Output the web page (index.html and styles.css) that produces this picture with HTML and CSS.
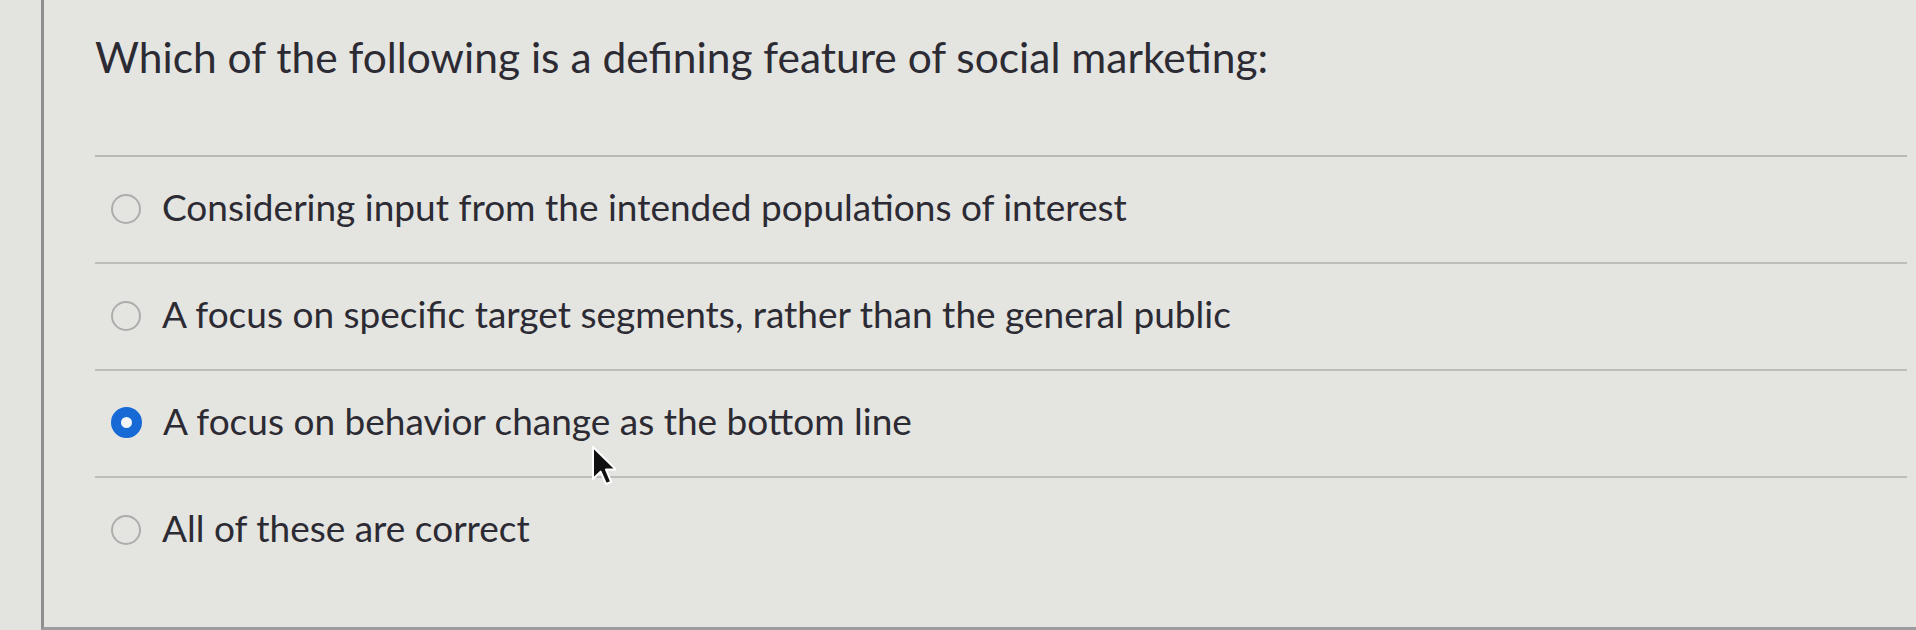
FILE: index.html
```html
<!DOCTYPE html>
<html lang="en">
<head>
<meta charset="utf-8">
<title>Quiz question</title>
<link rel="stylesheet" href="styles.css">
</head>
<body>
<div class="frame">
  <h1 class="question">Which of the following is a defining feature of social marketing:</h1>
  <ul class="answers">
    <li class="answer"><span class="radio"></span><span class="label">Considering input from the intended populations of interest</span></li>
    <li class="answer"><span class="radio"></span><span class="label">A focus on specific target segments, rather than the general public</span></li>
    <li class="answer"><span class="radio checked"></span><span class="label">A focus on behavior change as the bottom line</span></li>
    <li class="answer"><span class="radio"></span><span class="label">All of these are correct</span></li>
  </ul>
</div>
<svg class="cursor" width="24" height="40" viewBox="0 0 12 20" xmlns="http://www.w3.org/2000/svg">
  <path d="M0.5 0.5 L0.5 16.5 L4.3 12.8 L7 19 L9.6 17.9 L7 11.8 L12 11.8 Z" fill="#111" stroke="#fff" stroke-width="1" stroke-linejoin="round"/>
</svg>
</body>
</html>
```

FILE: styles.css
```css
html, body {
  margin: 0;
  padding: 0;
}
body {
  width: 1916px;
  height: 630px;
  overflow: hidden;
  background: #e3e3df;
  font-family: Lato, "Open Sans", sans-serif;
  color: #2c2b34;
  position: relative;
}
.frame {
  margin-left: 41px;
  height: 627px;
  border-left: 3px solid #8f8f92;
  border-bottom: 3px solid #9d9d9f;
  padding-left: 51px;
  padding-right: 9px;
  background: #e4e4e0;
}
.question {
  margin: 0;
  padding: 31px 0 73px 0;
  font-size: 42.5px;
  font-weight: 400;
  line-height: 51px;
  height: 51px;
  border-bottom: 2px solid #b9b9b7;
  box-sizing: content-box;
}
.answers {
  list-style: none;
  margin: 0;
  padding: 0;
}
.answer {
  display: flex;
  align-items: center;
  height: 105px;
  border-bottom: 2px solid #bdbdbb;
  padding-left: 16px;
}
.answer:last-child {
  border-bottom: none;
}
.radio {
  width: 26px;
  height: 26px;
  border: 2px solid #adadad;
  border-radius: 50%;
  box-sizing: content-box;
  flex: none;
  margin-right: 21px;
  margin-top: -2px;
}
.radio.checked {
  width: 11px;
  height: 11px;
  border: 10px solid #1769d6;
  background: #f4f5f7;
}
.label {
  font-size: 37px;
  line-height: 1.2;
  margin-top: -4px;
}
.cursor {
  position: absolute;
  left: 592px;
  top: 446px;
}
```
